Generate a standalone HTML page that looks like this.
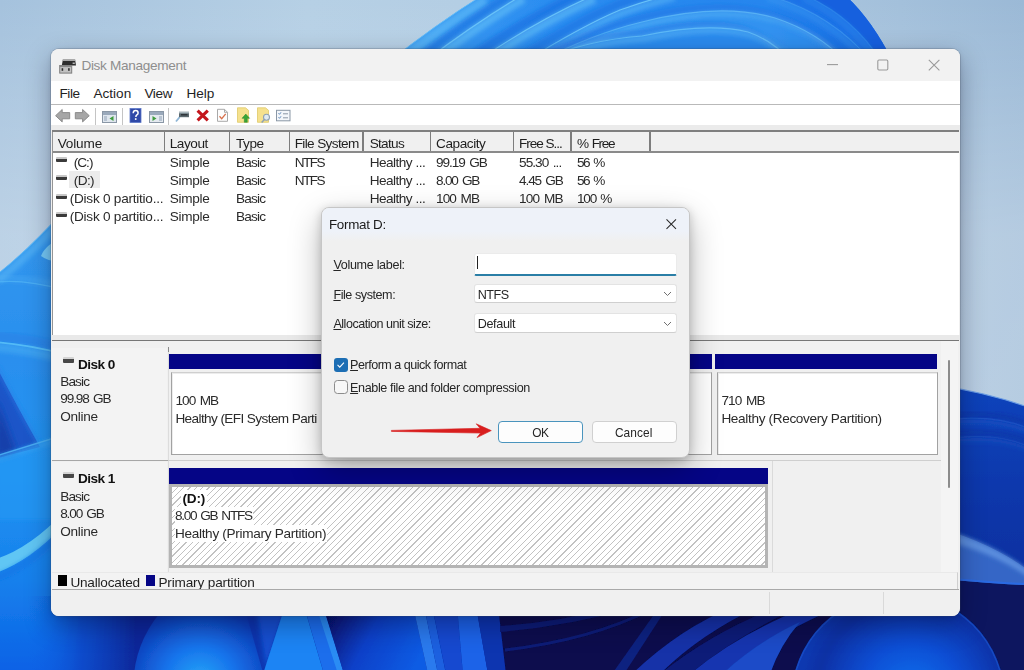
<!DOCTYPE html>
<html>
<head>
<meta charset="utf-8">
<title>Disk Management</title>
<style>
*{box-sizing:border-box;margin:0;padding:0}
html,body{width:1024px;height:670px;overflow:hidden;background:#a9c5de;font-family:"Liberation Sans",sans-serif}
.a{position:absolute}
.t{position:absolute;white-space:pre}
u{text-decoration:underline;text-underline-offset:.6px;text-decoration-thickness:1px}
#wall{position:absolute;left:0;top:0;width:1024px;height:670px}
#win{border-radius:8px;background:#f0f0f0;box-shadow:0 0 0 1px rgba(60,70,90,.2),0 9px 26px rgba(0,0,30,.34),0 1px 6px rgba(0,0,30,.11)}
#dlg{border-radius:8px;background:#f0f0f0;border:1px solid #c6c6c6;box-shadow:0 12px 32px rgba(0,0,0,.28),0 2px 10px rgba(0,0,0,.18);overflow:hidden}
</style>
</head>
<body>
<svg id="wall" viewBox="0 0 1024 670">
<defs>
<linearGradient id="sky" x1="0" y1="0" x2="1" y2="0">
<stop offset="0" stop-color="#a5c2dd"/><stop offset=".3" stop-color="#b6d0e5"/><stop offset=".6" stop-color="#b2cce3"/><stop offset=".88" stop-color="#a3c0db"/><stop offset="1" stop-color="#9bb9d6"/>
</linearGradient>
<linearGradient id="skyv" x1="0" y1="0" x2="0" y2="1">
<stop offset="0" stop-color="#fff" stop-opacity="0"/><stop offset=".35" stop-color="#fff" stop-opacity=".26"/><stop offset="1" stop-color="#fff" stop-opacity=".3"/>
</linearGradient>
<linearGradient id="tb" x1="0" y1="0" x2="1" y2="0">
<stop offset="0" stop-color="#3a9bf2"/><stop offset=".35" stop-color="#2a8cf0"/><stop offset=".75" stop-color="#2686ee"/><stop offset="1" stop-color="#1565e0"/>
</linearGradient>
<linearGradient id="lft" x1="0" y1="225" x2="0" y2="670" gradientUnits="userSpaceOnUse">
<stop offset="0" stop-color="#3297ee"/><stop offset=".3" stop-color="#2a8fee"/><stop offset=".55" stop-color="#2094f2"/><stop offset=".8" stop-color="#1680ec"/><stop offset="1" stop-color="#0b62e6"/>
</linearGradient>
<linearGradient id="rgt" x1="0" y1="390" x2="0" y2="670" gradientUnits="userSpaceOnUse">
<stop offset="0" stop-color="#0d43bb"/><stop offset=".45" stop-color="#0a35a8"/><stop offset="1" stop-color="#092a94"/>
</linearGradient>
<linearGradient id="botl" x1="28" y1="0" x2="135" y2="0" gradientUnits="userSpaceOnUse">
<stop offset="0" stop-color="#0b62e6" stop-opacity="0"/><stop offset=".5" stop-color="#0a44c4" stop-opacity=".8"/><stop offset="1" stop-color="#08289a"/>
</linearGradient>
<radialGradient id="p1" cx="200" cy="682" r="78" gradientUnits="userSpaceOnUse">
<stop offset="0" stop-color="#26a8f8"/><stop offset=".45" stop-color="#1774ec"/><stop offset="1" stop-color="#0c3ab6"/>
</radialGradient>
<radialGradient id="p2" cx="912" cy="694" r="112" gradientUnits="userSpaceOnUse">
<stop offset="0" stop-color="#0b72f0"/><stop offset=".45" stop-color="#0a4ed4"/><stop offset=".85" stop-color="#0a30a4"/><stop offset="1" stop-color="#0c38b0"/>
</radialGradient>
<linearGradient id="mid" x1="330" y1="612" x2="420" y2="660" gradientUnits="userSpaceOnUse">
<stop offset="0" stop-color="#06106a"/><stop offset=".45" stop-color="#0a40c8"/><stop offset="1" stop-color="#0e5ce4"/>
</linearGradient>
<filter id="b1" x="-5%" y="-5%" width="110%" height="110%"><feGaussianBlur stdDeviation="0.7"/></filter>
<filter id="b2" x="-30%" y="-30%" width="160%" height="160%"><feGaussianBlur stdDeviation="2.2"/></filter>
<filter id="b3" x="-30%" y="-30%" width="160%" height="160%"><feGaussianBlur stdDeviation="3.5"/></filter>
<filter id="b6" x="-30%" y="-30%" width="160%" height="160%"><feGaussianBlur stdDeviation="7"/></filter>
</defs>
<rect width="1024" height="670" fill="url(#sky)"/><rect width="1024" height="670" fill="url(#skyv)"/>
<g filter="url(#b1)"><clipPath id="ctb"><path d="M388 62 Q436 24 481 -4 L846 -4 Q872 20 893 62 Z"/></clipPath>
<path d="M388 62 Q436 24 481 -4 L846 -4 Q872 20 893 62 Z" fill="url(#tb)"/>
<g clip-path="url(#ctb)">
<path d="M388 62 Q436 24 481 -4" transform="translate(5 4)" fill="none" stroke="#6cc6fa" stroke-width="10" stroke-opacity="0.5" filter="url(#b2)"/><path d="M388 62 Q436 24 481 -4" fill="none" stroke="#6cc6fa" stroke-width="1.2" stroke-opacity="0.9"/>
<path d="M424 62 Q474 24 521 -4" transform="translate(-4 -3)" fill="none" stroke="#1668dc" stroke-width="12" stroke-opacity="0.5" filter="url(#b2)"/><path d="M424 62 Q474 24 521 -4" transform="translate(2.5 2.5)" fill="none" stroke="#6cc6fa" stroke-width="9" stroke-opacity="0.55" filter="url(#b2)"/><path d="M424 62 Q474 24 521 -4" fill="none" stroke="#6cc6fa" stroke-width="1.2" stroke-opacity="0.9"/>
<path d="M476 62 Q534 22 592 -4" transform="translate(-4 -3)" fill="none" stroke="#1668dc" stroke-width="14" stroke-opacity="0.55" filter="url(#b2)"/><path d="M476 62 Q534 22 592 -4" transform="translate(2.5 2.5)" fill="none" stroke="#6cc6fa" stroke-width="9" stroke-opacity="0.55" filter="url(#b2)"/><path d="M476 62 Q534 22 592 -4" fill="none" stroke="#6cc6fa" stroke-width="1.2" stroke-opacity="0.9"/>
<path d="M524 62 Q582 26 620 10 Q645 1 672 -6" transform="translate(-4 -3)" fill="none" stroke="#1668dc" stroke-width="12" stroke-opacity="0.45" filter="url(#b2)"/><path d="M524 62 Q582 26 620 10 Q645 1 672 -6" transform="translate(2.5 2.5)" fill="none" stroke="#6cc6fa" stroke-width="8" stroke-opacity="0.45" filter="url(#b2)"/><path d="M524 62 Q582 26 620 10 Q645 1 672 -6" fill="none" stroke="#6cc6fa" stroke-width="1.2" stroke-opacity="0.9"/>
<path d="M538 62 Q592 34 642 22 Q720 2 775 18 Q818 32 846 62Z" fill="#3a9cf3" fill-opacity=".55"/>
<path d="M538 62 Q592 34 642 22 Q720 2 775 18 Q818 32 846 62" transform="translate(-4 -3)" fill="none" stroke="#1668dc" stroke-width="8" stroke-opacity="0.3" filter="url(#b2)"/><path d="M538 62 Q592 34 642 22 Q720 2 775 18 Q818 32 846 62" transform="translate(2.5 2.5)" fill="none" stroke="#6cc6fa" stroke-width="6" stroke-opacity="0.35" filter="url(#b2)"/><path d="M538 62 Q592 34 642 22 Q720 2 775 18 Q818 32 846 62" fill="none" stroke="#6cc6fa" stroke-width="1.2" stroke-opacity="0.6"/>
<path d="M536 62 Q586 40 642 36 Q708 22 748 32 Q772 40 792 62Z" fill="#2888ee" fill-opacity=".8"/>
<path d="M536 62 Q586 40 642 36 Q708 22 748 32 Q772 40 792 62" transform="translate(-4 -3)" fill="none" stroke="#1668dc" stroke-width="7" stroke-opacity="0.3" filter="url(#b2)"/><path d="M536 62 Q586 40 642 36 Q708 22 748 32 Q772 40 792 62" transform="translate(2.5 2.5)" fill="none" stroke="#6cc6fa" stroke-width="7" stroke-opacity="0.4" filter="url(#b2)"/><path d="M536 62 Q586 40 642 36 Q708 22 748 32 Q772 40 792 62" fill="none" stroke="#6cc6fa" stroke-width="1.2" stroke-opacity="0.7"/>
<path d="M770 -4 Q832 14 872 62 L900 62 L900 -4Z" fill="#1b6ee6" fill-opacity=".75"/>
<path d="M806 -4 Q852 16 882 62 L900 62 L900 -4Z" fill="#145cdc" fill-opacity=".8"/>
<path d="M770 -4 Q832 14 872 62" transform="translate(-3 2)" fill="none" stroke="#4aa6f4" stroke-width="7" stroke-opacity="0.3" filter="url(#b2)"/><path d="M770 -4 Q832 14 872 62" fill="none" stroke="#4aa6f4" stroke-width="1.2" stroke-opacity="0.5"/>
<path d="M806 -4 Q852 16 882 62" transform="translate(-3 2)" fill="none" stroke="#3c98f0" stroke-width="7" stroke-opacity="0.3" filter="url(#b2)"/><path d="M806 -4 Q852 16 882 62" fill="none" stroke="#3c98f0" stroke-width="1.2" stroke-opacity="0.45"/>
</g></g>
<g filter="url(#b1)"><clipPath id="clf"><path d="M-4 275 Q28 250 64 210 L64 674 L-4 674Z"/></clipPath>
<path d="M-4 275 Q28 250 64 210 L64 674 L-4 674Z" fill="url(#lft)"/>
<g clip-path="url(#clf)">
<path d="M-4 275 Q28 250 64 210" transform="translate(2 5)" fill="none" stroke="#6cc6fa" stroke-width="8" stroke-opacity="0.4" filter="url(#b2)"/><path d="M-4 275 Q28 250 64 210" fill="none" stroke="#6cc6fa" stroke-width="1.2" stroke-opacity="0.8"/>
<path d="M64 236 Q45 245 41 256 Q50 263 64 261Z" fill="#74caf7" filter="url(#b1)"/>
<path d="M-4 282 Q26 279 64 290" transform="translate(0 -3)" fill="none" stroke="#52b4f5" stroke-width="6" stroke-opacity="0.3" filter="url(#b2)"/><path d="M-4 282 Q26 279 64 290" fill="none" stroke="#52b4f5" stroke-width="1.4" stroke-opacity="0.75"/>
<path d="M-4 342 Q30 345 64 354" transform="translate(0 -6)" fill="none" stroke="#1668dc" stroke-width="10" stroke-opacity="0.25" filter="url(#b2)"/><path d="M-4 342 Q30 345 64 354" transform="translate(0 5)" fill="none" stroke="#58bff7" stroke-width="9" stroke-opacity="0.35" filter="url(#b2)"/><path d="M-4 342 Q30 345 64 354" fill="none" stroke="#58bff7" stroke-width="1.8" stroke-opacity="0.9"/>
<path d="M-6 362 Q18 408 40 447 L-6 459Z" fill="#1a54c8" filter="url(#b1)"/>
<path d="M-4 366 Q18 408 39 446" fill="none" stroke="#2a7ae4" stroke-width="4" stroke-opacity=".55" filter="url(#b2)"/>
<path d="M-4 398 L16 452 L-4 457Z" fill="#1240aa" filter="url(#b3)"/>
<path d="M-4 457 L64 434 L64 520 L-4 520Z" fill="#2498f3" fill-opacity=".6" filter="url(#b2)"/>
<path d="M-4 456 L64 435" transform="translate(0 3)" fill="none" stroke="#4cb4f6" stroke-width="5" stroke-opacity="0.3" filter="url(#b2)"/><path d="M-4 456 L64 435" fill="none" stroke="#4cb4f6" stroke-width="1.5" stroke-opacity="0.85"/>
<path d="M-4 559 Q30 548 64 512 L64 525 Q30 561 -4 573Z" fill="#60c6f4"/>
<path d="M-4 573 Q30 561 64 525" transform="translate(0 5)" fill="none" stroke="#1470e4" stroke-width="8" stroke-opacity="0.5" filter="url(#b2)"/>
</g></g>
<g filter="url(#b1)">
<rect x="-4" y="596" width="170" height="78" fill="url(#lft)"/>
<rect x="28" y="596" width="135" height="78" fill="url(#botl)"/>
<rect x="150" y="600" width="880" height="74" fill="#08289a"/>
<path d="M134 674 Q138 636 166 606 L300 606 L300 674Z" fill="url(#p1)"/>
<path d="M244 606 L286 606 L264 676Z" fill="#0c36b0"/>
<path d="M256 606 L286 606 L266 668Z" fill="#1650d0" filter="url(#b2)"/>
<path d="M285 606 L304 606 L324 674 L263 674Z" fill="#1a84f4"/>
<path d="M304 606 L323 606 L344 674 L324 674Z" fill="#1a6eec"/>
<path d="M316 606 L323 606 L344 674 L338 674Z" fill="#2a8cf4"/>
<path d="M323 606 L413 606 L428 674 L344 674Z" fill="url(#mid)"/>
<path d="M413 606 L424 606 L438 674 L428 674Z" fill="#2a7aee"/>
<path d="M424 606 L432 606 L446 674 L438 674Z" fill="#1c60e0"/>
<path d="M432 606 L457 606 L463 674 L446 674Z" fill="#1248d0"/>
<path d="M457 606 L476 606 L488 674 L463 674Z" fill="#1c64e8"/>
<path d="M476 606 L500 606 L506 674 L488 674Z" fill="#0c34b0"/>
<path d="M498 606 L1028 606 L1028 674 L506 674Z" fill="#070d4e"/>
<path d="M500 632 Q570 626 640 606 L620 606 Q560 622 500 626Z" fill="#0c1c74"/>
<path d="M505 650 Q590 640 650 610" fill="none" stroke="#0c1e78" stroke-width="3"/>
<path d="M612 674 L660 606 L668 606 L624 674Z" fill="#0e2280"/>
<path d="M632 674 Q680 628 735 606 L760 606 Q700 634 660 674Z" fill="#1432a8"/>
<path d="M660 674 Q710 634 770 610 L800 606 Q730 640 690 674Z" fill="#0a1c78"/>
<path d="M690 674 Q740 632 810 606 L840 606 Q760 642 722 674Z" fill="#1436b0"/>
<path d="M722 674 Q760 640 800 622 Q780 645 770 674Z" fill="#1a4cc8"/>
</g>
<g filter="url(#b1)">
<path d="M936 385 Q985 392 1028 407 L1028 674 L936 674Z" fill="url(#rgt)"/>
<path d="M936 385 Q985 392 1028 407" fill="none" stroke="#6a9ce4" stroke-width="1.1"/>
<path d="M936 421 Q990 413 1028 428" transform="translate(0 -4)" fill="none" stroke="#082c98" stroke-width="6" stroke-opacity="0.35" filter="url(#b2)"/><path d="M936 421 Q990 413 1028 428" transform="translate(0 3)" fill="none" stroke="#2258c8" stroke-width="6" stroke-opacity="0.5" filter="url(#b2)"/><path d="M936 421 Q990 413 1028 428" fill="none" stroke="#2258c8" stroke-width="1.2" stroke-opacity="0.6"/>
<path d="M936 441 Q990 430 1028 446" transform="translate(0 -4)" fill="none" stroke="#082c98" stroke-width="6" stroke-opacity="0.3" filter="url(#b2)"/><path d="M936 441 Q990 430 1028 446" transform="translate(0 3)" fill="none" stroke="#1e52c0" stroke-width="6" stroke-opacity="0.45" filter="url(#b2)"/><path d="M936 441 Q990 430 1028 446" fill="none" stroke="#1e52c0" stroke-width="1.2" stroke-opacity="0.5"/>
<path d="M936 527 Q992 543 1028 570 L1028 674 L936 674Z" fill="#07155e"/>
<path d="M936 527 Q992 543 1028 570 L1028 585 Q990 584 936 578Z" fill="#3466c6"/>
<path d="M936 527 Q992 543 1028 570 L1028 577 Q992 551 936 539Z" fill="#5c8ede" filter="url(#b2)"/>
<path d="M936 577 Q990 583 1028 584" fill="none" stroke="#2c6ae2" stroke-width="2" filter="url(#b1)"/>
<circle cx="898" cy="700" r="107" fill="url(#p2)"/>
<circle cx="898" cy="700" r="106" fill="none" stroke="#1a52cc" stroke-width="1.5" stroke-opacity=".7"/>
</g>
</svg>
<div class="a" id="win" style="left:51px;top:49px;width:909px;height:567px"></div>
<div class="a" style="left:51px;top:49px;width:909px;height:32px;background:#f2f2f2;border-radius:8px 8px 0 0"></div>
<svg class="a" style="left:58px;top:57px" width="20" height="18" viewBox="0 0 20 18">
   <path d="M5 2H17L18 8.500H3.800Z" fill="#2e2e2e"/>
   <path d="M5 2H17L17.300 4H4.600Z" fill="#aaaaaa"/>
   <rect x="14.600" y="5.600" width="2.200" height="1.200" fill="#d8d8d8"/>
   <rect x="1.700" y="8.500" width="12" height="7.600" fill="#c2c2c2" stroke="#7e7e7e" stroke-width="1"/>
   <rect x="1.700" y="8.500" width="12" height="1.600" fill="#8a8a8a"/>
   <rect x="3.600" y="11.200" width="1.600" height="2.600" fill="#2f2f2f"/><rect x="10.100" y="11.200" width="1.600" height="2.600" fill="#2f2f2f"/>
  </svg>
<span class="t" style="left:81.4px;top:59px;font-size:13.6px;line-height:13.6px;letter-spacing:-0.318px;color:#8e8e8e;">Disk Management</span>
<svg class="a" style="left:821px;top:57px" width="125" height="16" viewBox="0 0 125 16" fill="none" stroke="#9a9a9a" stroke-width="1.1">
   <path d="M6 7.600H17"/><rect x="56.800" y="3" width="10" height="10" rx="1.200"/>
   <path d="M107.800 2.800L118.400 13.400M118.400 2.800L107.800 13.400"/></svg>
<div class="a" style="left:51px;top:81px;width:909px;height:23.5px;background:#fff"></div>
<span class="t" style="left:59.4px;top:87px;font-size:13.6px;line-height:13.6px;letter-spacing:-0.402px;color:#1f1f1f;">File</span>
<span class="t" style="left:93.4px;top:87px;font-size:13.6px;line-height:13.6px;letter-spacing:0.003px;color:#1f1f1f;">Action</span>
<span class="t" style="left:144.4px;top:87px;font-size:13.6px;line-height:13.6px;letter-spacing:-0.355px;color:#1f1f1f;">View</span>
<span class="t" style="left:186.4px;top:87px;font-size:13.6px;line-height:13.6px;letter-spacing:-0.042px;color:#1f1f1f;">Help</span>
<div class="a" style="left:51px;top:104px;width:909px;height:1px;background:#b9b9b9"></div>
<div class="a" style="left:51px;top:105px;width:909px;height:20px;background:#fff"></div>
<div class="a" style="left:51px;top:105px"><svg class="abs" style="left:0;top:0" width="300" height="20" viewBox="0 0 300 20">
   <!-- back / forward -->
   <path d="M4.600 10.700L11.200 4.500V7.600H18.700V13.800H11.200V16.900Z" fill="#a6a6a6" stroke="#858585" stroke-width=".9" stroke-linejoin="round"/>
   <path d="M38.250 10.700L31.600 4.500V7.600H24.300V13.800H31.600V16.900Z" fill="#a6a6a6" stroke="#858585" stroke-width=".9" stroke-linejoin="round"/>
   <rect x="44" y="3" width="1" height="17" fill="#c4c4c4"/>
   <!-- show/hide console tree -->
   <rect x="51.5" y="6.5" width="14" height="11" fill="#dfe6ee" stroke="#8a97a6"/>
   <rect x="52" y="7" width="13" height="3" fill="#9aa9bb"/>
   <rect x="53" y="11" width="3" height="5" fill="#b8c4d2"/>
   <path d="M62.5 11v5l-4-2.5z" fill="#3f9b3f"/>
   <rect x="71" y="3" width="1" height="17" fill="#c4c4c4"/>
   <!-- help -->
   <rect x="79" y="3.5" width="11" height="14" fill="#2f49a8"/>
   <rect x="79" y="3.5" width="11" height="14" fill="none" stroke="#5d78c8" stroke-width=".8"/>
   <path d="M82.2 8.2q0-2.6 2.5-2.6 2.4 0 2.4 2.3 0 1.2-1.2 2-1 .7-1 2" fill="none" stroke="#fff" stroke-width="1.5"/>
   <rect x="83.9" y="13.2" width="1.6" height="1.7" fill="#fff"/>
   <!-- action pane -->
   <rect x="98.5" y="6.5" width="14" height="11" fill="#e4e9ef" stroke="#8a97a6"/>
   <rect x="99" y="7" width="13" height="3" fill="#9aa9bb"/>
   <path d="M101.5 11v5l4-2.5z" fill="#3f9b3f"/>
   <rect x="108" y="11" width="3" height="5" fill="#b8c4d2"/>
   <rect x="117" y="3" width="1" height="17" fill="#c4c4c4"/>
   <!-- connect -->
   <path d="M125 16.500l3.600-4.400" stroke="#8fb6d6" stroke-width="1.700"/>
   <rect x="128" y="6.800" width="10" height="5.400" fill="#5b686e"/>
   <rect x="128" y="6.800" width="10" height="1.600" fill="#a9b6bc"/>
   <rect x="130" y="9" width="6.500" height="1.500" fill="#2e3438"/>
   <g transform="translate(0 -1.200)">
   <!-- delete -->
   <path d="M146.600 6.800l10.200 9.800M156.800 6.800L146.600 16.600" stroke="#c4161c" stroke-width="3.100" stroke-linecap="butt"/>
   <!-- properties check -->
   <path d="M166.500 5.500h7l3 3v9h-10z" fill="#fdfdfd" stroke="#a9a9a9"/>
   <path d="M173.500 5.500v3h3" fill="none" stroke="#a9a9a9"/>
   <path d="M168.500 12.500l2.200 2.400 4-4.800" fill="none" stroke="#d8704a" stroke-width="1.300"/>
   <!-- folder up -->
   <path d="M186.500 4h8l3 2.500v12h-11z" fill="#f5e18e" stroke="#e0c968" stroke-width=".8"/>
   <path d="M193.300 18.500v-4h-2.300l3.800-4.200 3.800 4.200h-2.300v4z" fill="#38a638" stroke="#2a862a" stroke-width=".5"/>
   <!-- folder search -->
   <path d="M206.500 4h8l3 2.500v12h-11z" fill="#f5e18e" stroke="#e0c968" stroke-width=".8"/>
   <circle cx="215.500" cy="13.500" r="3" fill="#dfeaf2" stroke="#8ea2b4" stroke-width="1.100"/>
   <path d="M213.300 15.800l-2.600 2.800" stroke="#8ea2b4" stroke-width="1.500"/>
   <!-- list -->
   <rect x="225.500" y="6.500" width="13.500" height="10.500" fill="#f3f6fa" stroke="#8a97a6"/>
   <path d="M227.500 9.500l1 1 1.500-2M227.500 13.500l1 1 1.500-2" fill="none" stroke="#4a78b0" stroke-width=".9"/>
   <path d="M232 10h5M232 14h5" stroke="#8a97a6"/>
   </g>
  </svg></div>
<div class="a" style="left:51px;top:125px;width:909px;height:5px;background:#ebebeb"></div>
<div class="a" style="left:52px;top:130px;width:907px;height:2px;background:#7f7f7f"></div>
<div class="a" style="left:52px;top:132px;width:907px;height:203px;background:#fff;border-left:1px solid #959595"></div>
<div class="a" style="left:53px;top:132px;width:906px;height:19px;background:#f0f0f0"></div>
<div class="a" style="left:53px;top:151px;width:906px;height:2px;background:#8a8a8a"></div>
<div class="a" style="left:163.7px;top:132px;width:1.3px;height:19px;background:#7d7d7d"></div>
<div class="a" style="left:229.1px;top:132px;width:1.3px;height:19px;background:#7d7d7d"></div>
<div class="a" style="left:288.7px;top:132px;width:1.3px;height:19px;background:#7d7d7d"></div>
<div class="a" style="left:362.4px;top:132px;width:1.3px;height:19px;background:#7d7d7d"></div>
<div class="a" style="left:430.0px;top:132px;width:1.3px;height:19px;background:#7d7d7d"></div>
<div class="a" style="left:512.8px;top:132px;width:1.3px;height:19px;background:#7d7d7d"></div>
<div class="a" style="left:570.4px;top:132px;width:1.3px;height:19px;background:#7d7d7d"></div>
<div class="a" style="left:649.4px;top:132px;width:1.3px;height:19px;background:#7d7d7d"></div>
<span class="t" style="left:57.7px;top:137px;font-size:13.6px;line-height:13.6px;letter-spacing:-0.157px;color:#1f1f1f;">Volume</span>
<span class="t" style="left:169.7px;top:137px;font-size:13.6px;line-height:13.6px;letter-spacing:-0.421px;color:#1f1f1f;">Layout</span>
<span class="t" style="left:236.0px;top:137px;font-size:13.6px;line-height:13.6px;letter-spacing:-0.471px;color:#1f1f1f;">Type</span>
<span class="t" style="left:294.7px;top:137px;font-size:13.6px;line-height:13.6px;letter-spacing:-0.638px;color:#1f1f1f;">File System</span>
<span class="t" style="left:369.7px;top:137px;font-size:13.6px;line-height:13.6px;letter-spacing:-0.708px;color:#1f1f1f;">Status</span>
<span class="t" style="left:436.0px;top:137px;font-size:13.6px;line-height:13.6px;letter-spacing:-0.424px;color:#1f1f1f;">Capacity</span>
<span class="t" style="left:519.1px;top:137px;font-size:13.6px;line-height:13.6px;letter-spacing:-1.047px;color:#1f1f1f;">Free S...</span>
<span class="t" style="left:576.9px;top:137px;font-size:13.6px;line-height:13.6px;letter-spacing:-1.355px;color:#1f1f1f;word-spacing:1.6px;">% Free</span>
<div class="a" style="left:68.5px;top:171.2px;width:31px;height:17px;background:#ececec"></div>
<div class="a" style="left:56.3px;top:157.2px;width:10.7px;height:5px;background:linear-gradient(#c8c8c8 0,#c8c8c8 42%,#3a3a3a 42%);border-radius:1px"></div>
<span class="t" style="left:73.8px;top:156px;font-size:13.6px;line-height:13.6px;letter-spacing:-1.014px;color:#2b2b2b;">(C:)</span>
<span class="t" style="left:169.7px;top:156px;font-size:13.6px;line-height:13.6px;letter-spacing:-0.277px;color:#2b2b2b;">Simple</span>
<span class="t" style="left:236.0px;top:156px;font-size:13.6px;line-height:13.6px;letter-spacing:-0.81px;color:#2b2b2b;">Basic</span>
<span class="t" style="left:294.7px;top:156px;font-size:13.6px;line-height:13.6px;letter-spacing:-1.5px;color:#2b2b2b;">NTFS</span>
<span class="t" style="left:369.7px;top:156px;font-size:13.6px;line-height:13.6px;letter-spacing:-0.518px;color:#2b2b2b;">Healthy ...</span>
<span class="t" style="left:436.0px;top:156px;font-size:13.6px;line-height:13.6px;letter-spacing:-1.03px;color:#2b2b2b;word-spacing:1.6px;">99.19 GB</span>
<span class="t" style="left:519.1px;top:156px;font-size:13.6px;line-height:13.6px;letter-spacing:-0.958px;color:#2b2b2b;word-spacing:1.6px;">55.30 ...</span>
<span class="t" style="left:576.9px;top:156px;font-size:13.6px;line-height:13.6px;letter-spacing:-1.371px;color:#2b2b2b;word-spacing:1.6px;">56 %</span>
<div class="a" style="left:56.3px;top:175.3px;width:10.7px;height:5px;background:linear-gradient(#c8c8c8 0,#c8c8c8 42%,#3a3a3a 42%);border-radius:1px"></div>
<span class="t" style="left:73.8px;top:174px;font-size:13.6px;line-height:13.6px;letter-spacing:-0.614px;color:#2b2b2b;">(D:)</span>
<span class="t" style="left:169.7px;top:174px;font-size:13.6px;line-height:13.6px;letter-spacing:-0.277px;color:#2b2b2b;">Simple</span>
<span class="t" style="left:236.0px;top:174px;font-size:13.6px;line-height:13.6px;letter-spacing:-0.81px;color:#2b2b2b;">Basic</span>
<span class="t" style="left:294.7px;top:174px;font-size:13.6px;line-height:13.6px;letter-spacing:-1.5px;color:#2b2b2b;">NTFS</span>
<span class="t" style="left:369.7px;top:174px;font-size:13.6px;line-height:13.6px;letter-spacing:-0.518px;color:#2b2b2b;">Healthy ...</span>
<span class="t" style="left:436.0px;top:174px;font-size:13.6px;line-height:13.6px;letter-spacing:-1.182px;color:#2b2b2b;word-spacing:1.6px;">8.00 GB</span>
<span class="t" style="left:519.1px;top:174px;font-size:13.6px;line-height:13.6px;letter-spacing:-1.125px;color:#2b2b2b;word-spacing:1.6px;">4.45 GB</span>
<span class="t" style="left:576.9px;top:174px;font-size:13.6px;line-height:13.6px;letter-spacing:-1.371px;color:#2b2b2b;word-spacing:1.6px;">56 %</span>
<div class="a" style="left:56.3px;top:193.5px;width:10.7px;height:5px;background:linear-gradient(#c8c8c8 0,#c8c8c8 42%,#3a3a3a 42%);border-radius:1px"></div>
<span class="t" style="left:69.7px;top:192px;font-size:13.6px;line-height:13.6px;letter-spacing:-0.242px;color:#2b2b2b;">(Disk 0 partitio...</span>
<span class="t" style="left:169.7px;top:192px;font-size:13.6px;line-height:13.6px;letter-spacing:-0.277px;color:#2b2b2b;">Simple</span>
<span class="t" style="left:236.0px;top:192px;font-size:13.6px;line-height:13.6px;letter-spacing:-0.81px;color:#2b2b2b;">Basic</span>
<span class="t" style="left:369.7px;top:192px;font-size:13.6px;line-height:13.6px;letter-spacing:-0.518px;color:#2b2b2b;">Healthy ...</span>
<span class="t" style="left:436.0px;top:192px;font-size:13.6px;line-height:13.6px;letter-spacing:-0.877px;color:#2b2b2b;word-spacing:1.6px;">100 MB</span>
<span class="t" style="left:519.1px;top:192px;font-size:13.6px;line-height:13.6px;letter-spacing:-0.81px;color:#2b2b2b;word-spacing:1.6px;">100 MB</span>
<span class="t" style="left:576.9px;top:192px;font-size:13.6px;line-height:13.6px;letter-spacing:-1.169px;color:#2b2b2b;word-spacing:1.6px;">100 %</span>
<div class="a" style="left:56.3px;top:211.6px;width:10.7px;height:5px;background:linear-gradient(#c8c8c8 0,#c8c8c8 42%,#3a3a3a 42%);border-radius:1px"></div>
<span class="t" style="left:69.7px;top:210px;font-size:13.6px;line-height:13.6px;letter-spacing:-0.242px;color:#2b2b2b;">(Disk 0 partitio...</span>
<span class="t" style="left:169.7px;top:210px;font-size:13.6px;line-height:13.6px;letter-spacing:-0.277px;color:#2b2b2b;">Simple</span>
<span class="t" style="left:236.0px;top:210px;font-size:13.6px;line-height:13.6px;letter-spacing:-0.81px;color:#2b2b2b;">Basic</span>
<div class="a" style="left:51px;top:335px;width:909px;height:5px;background:#e9e9e9"></div>
<div class="a" style="left:52px;top:339.7px;width:907px;height:1.6px;background:#767676"></div>
<div class="a" style="left:52px;top:341.3px;width:907px;height:231px;background:#f0f0f0"></div>
<div class="a" style="left:52px;top:348px;width:115px;height:112px;background:#f3f3f3"></div>
<div class="a" style="left:63px;top:357.2px;width:11px;height:6px;background:linear-gradient(#d4d4d4 0,#d4d4d4 40%,#474747 40%);border-radius:1px"></div>
<span class="t" style="left:78.0px;top:358px;font-size:13.6px;line-height:13.6px;letter-spacing:-0.56px;color:#111;font-weight:bold;">Disk 0</span>
<span class="t" style="left:60.2px;top:375px;font-size:13.6px;line-height:13.6px;letter-spacing:-0.85px;color:#2a2a2a;">Basic</span>
<span class="t" style="left:60.2px;top:392px;font-size:13.6px;line-height:13.6px;letter-spacing:-1.08px;color:#2a2a2a;word-spacing:1.6px;">99.98 GB</span>
<span class="t" style="left:60.2px;top:410px;font-size:13.6px;line-height:13.6px;letter-spacing:-0.299px;color:#2a2a2a;">Online</span>
<div class="a" style="left:167.5px;top:347px;width:1px;height:225px;background:#dcdcdc"></div>
<div class="a" style="left:167.8px;top:347px;width:1px;height:5px;background:#8a8a8a"></div>
<div class="a" style="left:169px;top:354px;width:543px;height:15px;background:#050586"></div>
<div class="a" style="left:171px;top:372px;width:541px;height:83px;background:#fff;border:1px solid #a2a2a2;border-top-color:#cfcfcf;box-shadow:inset 1px 1px 0 #ececec"></div>
<span class="t" style="left:175.4px;top:394px;font-size:13.6px;line-height:13.6px;letter-spacing:-0.943px;color:#2b2b2b;word-spacing:1.6px;">100 MB</span>
<span class="t" style="left:175.4px;top:412px;font-size:13.6px;line-height:13.6px;letter-spacing:-0.603px;color:#2b2b2b;">Healthy (EFI System Parti</span>
<div class="a" style="left:715px;top:354px;width:222px;height:15px;background:#050586"></div>
<div class="a" style="left:717px;top:372px;width:221px;height:83px;background:#fff;border:1px solid #a2a2a2;border-top-color:#cfcfcf;box-shadow:inset 1px 1px 0 #ececec"></div>
<span class="t" style="left:721.4px;top:394px;font-size:13.6px;line-height:13.6px;letter-spacing:-0.86px;color:#2b2b2b;word-spacing:1.6px;">710 MB</span>
<span class="t" style="left:721.4px;top:412px;font-size:13.6px;line-height:13.6px;letter-spacing:-0.342px;color:#2b2b2b;">Healthy (Recovery Partition)</span>
<div class="a" style="left:52px;top:460px;width:116px;height:1px;background:#a6a6a6"></div>
<div class="a" style="left:168px;top:460px;width:773px;height:1px;background:#cfcfcf"></div>
<div class="a" style="left:52px;top:462px;width:115px;height:110px;background:#f3f3f3"></div>
<div class="a" style="left:63px;top:471.5px;width:11px;height:6px;background:linear-gradient(#d4d4d4 0,#d4d4d4 40%,#474747 40%);border-radius:1px"></div>
<span class="t" style="left:78.0px;top:472px;font-size:13.6px;line-height:13.6px;letter-spacing:-0.56px;color:#111;font-weight:bold;">Disk 1</span>
<span class="t" style="left:60.2px;top:490px;font-size:13.6px;line-height:13.6px;letter-spacing:-0.85px;color:#2a2a2a;">Basic</span>
<span class="t" style="left:60.2px;top:507px;font-size:13.6px;line-height:13.6px;letter-spacing:-1.139px;color:#2a2a2a;word-spacing:1.6px;">8.00 GB</span>
<span class="t" style="left:60.2px;top:525px;font-size:13.6px;line-height:13.6px;letter-spacing:-0.299px;color:#2a2a2a;">Online</span>
<div class="a" style="left:169px;top:468px;width:599px;height:15.5px;background:#050586"></div>
<div class="a" style="left:169px;top:484px;width:599px;height:84px;border:3.500px solid #b4b4b4;background:#fff repeating-linear-gradient(135deg,#fff 0,#fff 3.600px,#c2c2c2 3.600px,#c2c2c2 4.500px)"></div>
<div class="a" style="left:181px;top:490px;width:25.5px;height:17.5px;background:#fff"></div>
<div class="a" style="left:174.5px;top:507.3px;width:78px;height:17.5px;background:#fff"></div>
<div class="a" style="left:174.5px;top:524.6px;width:152px;height:17.5px;background:#fff"></div>
<span class="t" style="left:182.6px;top:492px;font-size:13.6px;line-height:13.6px;letter-spacing:-0.252px;color:#111;font-weight:bold;">(D:)</span>
<span class="t" style="left:174.9px;top:509px;font-size:13.6px;line-height:13.6px;letter-spacing:-1.296px;color:#2b2b2b;word-spacing:1.6px;">8.00 GB NTFS</span>
<span class="t" style="left:174.9px;top:527px;font-size:13.6px;line-height:13.6px;letter-spacing:-0.3px;color:#2b2b2b;">Healthy (Primary Partition)</span>
<div class="a" style="left:772px;top:461px;width:1px;height:111px;background:#dadada"></div>
<div class="a" style="left:941px;top:341.3px;width:17px;height:231px;background:#f4f4f4"></div>
<div class="a" style="left:948px;top:360px;width:2px;height:128px;background:#8c8c8c;border-radius:1px"></div>
<div class="a" style="left:52px;top:572px;width:906px;height:16.5px;background:#f3f3f3;border-right:1px solid #cfcfcf;border-top:1px solid #e9e9e9"></div>
<div class="a" style="left:58px;top:575.3px;width:9px;height:10.8px;background:#000"></div>
<span class="t" style="left:70.4px;top:576px;font-size:13.6px;line-height:13.6px;letter-spacing:-0.2px;color:#1f1f1f;">Unallocated</span>
<div class="a" style="left:146px;top:575.3px;width:9px;height:10.8px;background:#050586"></div>
<span class="t" style="left:158.4px;top:576px;font-size:13.6px;line-height:13.6px;letter-spacing:-0.157px;color:#1f1f1f;">Primary partition</span>
<div class="a" style="left:52px;top:588.5px;width:907px;height:1.2px;background:#a9a9a9"></div>
<div class="a" style="left:51px;top:590px;width:909px;height:26px;background:#f0f0f0;border-radius:0 0 8px 8px"></div>
<div class="a" style="left:768.5px;top:592px;width:1px;height:22px;background:#d9d9d9"></div>
<div class="a" style="left:883px;top:592px;width:1px;height:22px;background:#d9d9d9"></div>
<div class="a" id="dlg" style="left:321px;top:207px;width:369px;height:251px"><div class="a" style="left:0;top:0;width:100%;height:33px;background:linear-gradient(#eef2f9 0,#eef2f9 70%,#f0f0f0 100%)"></div></div>
<span class="t" style="left:328.9px;top:218px;font-size:13.4px;line-height:13.4px;letter-spacing:-0.281px;color:#1b1b1b;">Format D:</span>
<svg class="a" style="left:665px;top:218px" width="13" height="13" viewBox="0 0 13 13"><path d="M1.500 1.400L11 10.900M11 1.400L1.500 10.900" stroke="#2a2a2a" stroke-width="1.050" fill="none"/></svg>
<span class="t" style="left:333.4px;top:259px;font-size:12.6px;line-height:12.6px;letter-spacing:-0.325px;color:#262626;"><u>V</u>olume label:</span>
<div class="a" style="left:474px;top:253px;width:203px;height:23px;background:#fff;border:1px solid #ebebeb;border-bottom:2px solid #2a7ea6;border-radius:3px 3px 2px 2px"></div>
<div class="a" style="left:476.5px;top:256px;width:1px;height:13px;background:#222"></div>
<span class="t" style="left:333.4px;top:289px;font-size:12.6px;line-height:12.6px;letter-spacing:-0.449px;color:#262626;"><u>F</u>ile system:</span>
<div class="a" style="left:474px;top:283.6px;width:203px;height:19.8px;background:#fff;border:1px solid #e3e3e3;border-bottom-color:#cfcfcf;border-radius:3px"><svg class="a" style="right:4.500px;top:6.500px" width="9" height="6" viewBox="0 0 9 6"><path d="M1 1L4.500 4.500L8 1" fill="none" stroke="#707070" stroke-width="1"/></svg></div>
<span class="t" style="left:477.7px;top:289px;font-size:12.6px;line-height:12.6px;letter-spacing:-0.473px;color:#262626;">NTFS</span>
<span class="t" style="left:333.4px;top:318px;font-size:12.6px;line-height:12.6px;letter-spacing:-0.501px;color:#262626;"><u>A</u>llocation unit size:</span>
<div class="a" style="left:474px;top:313.1px;width:203px;height:19.8px;background:#fff;border:1px solid #e3e3e3;border-bottom-color:#cfcfcf;border-radius:3px"><svg class="a" style="right:4.500px;top:6.500px" width="9" height="6" viewBox="0 0 9 6"><path d="M1 1L4.500 4.500L8 1" fill="none" stroke="#707070" stroke-width="1"/></svg></div>
<span class="t" style="left:477.7px;top:318px;font-size:12.6px;line-height:12.6px;letter-spacing:-0.344px;color:#262626;">Default</span>
<div class="a" style="left:334px;top:358.4px;width:13.5px;height:13.5px;background:#1c6eb4;border-radius:3px"><svg width="13.500" height="13.500" viewBox="0 0 13 13" style="display:block"><path d="M3.400 6.700L5.500 8.800L9.600 4.500" fill="none" stroke="#fff" stroke-width="1"/></svg></div>
<span class="t" style="left:350.1px;top:359px;font-size:12.6px;line-height:12.6px;letter-spacing:-0.513px;color:#262626;"><u>P</u>erform a quick format</span>
<div class="a" style="left:333.8px;top:380.4px;width:13.8px;height:13.8px;background:#f7f7f7;border:1.2px solid #8c8c8c;border-radius:3.500px"></div>
<span class="t" style="left:350.1px;top:382px;font-size:12.6px;line-height:12.6px;letter-spacing:-0.395px;color:#262626;"><u>E</u>nable file and folder compression</span>
<svg class="a" style="left:388px;top:420px" width="108" height="22" viewBox="0 0 108 22"><path d="M3.400 10.400L92 8.300L88.200 3.800L103.300 10.600L89 17.600L92.500 13.100L3.400 11.400Z" fill="#d81e1e" stroke="#d81e1e" stroke-width=".6" stroke-linejoin="round"/></svg>
<div class="a" style="left:497.5px;top:421px;width:85.5px;height:22.3px;background:#fdfdfd;border:1px solid #4a94bd;border-radius:4px"></div>
<div class="a" style="left:591.5px;top:421px;width:85.5px;height:22.3px;background:#fdfdfd;border:1px solid #d0d0d0;border-radius:4px"></div>
<span class="t" style="left:532.2px;top:428px;font-size:11.9px;line-height:11.9px;letter-spacing:-0.394px;color:#262626;">OK</span>
<span class="t" style="left:614.9px;top:428px;font-size:11.9px;line-height:11.9px;letter-spacing:0.097px;color:#262626;">Cancel</span>
</body>
</html>
